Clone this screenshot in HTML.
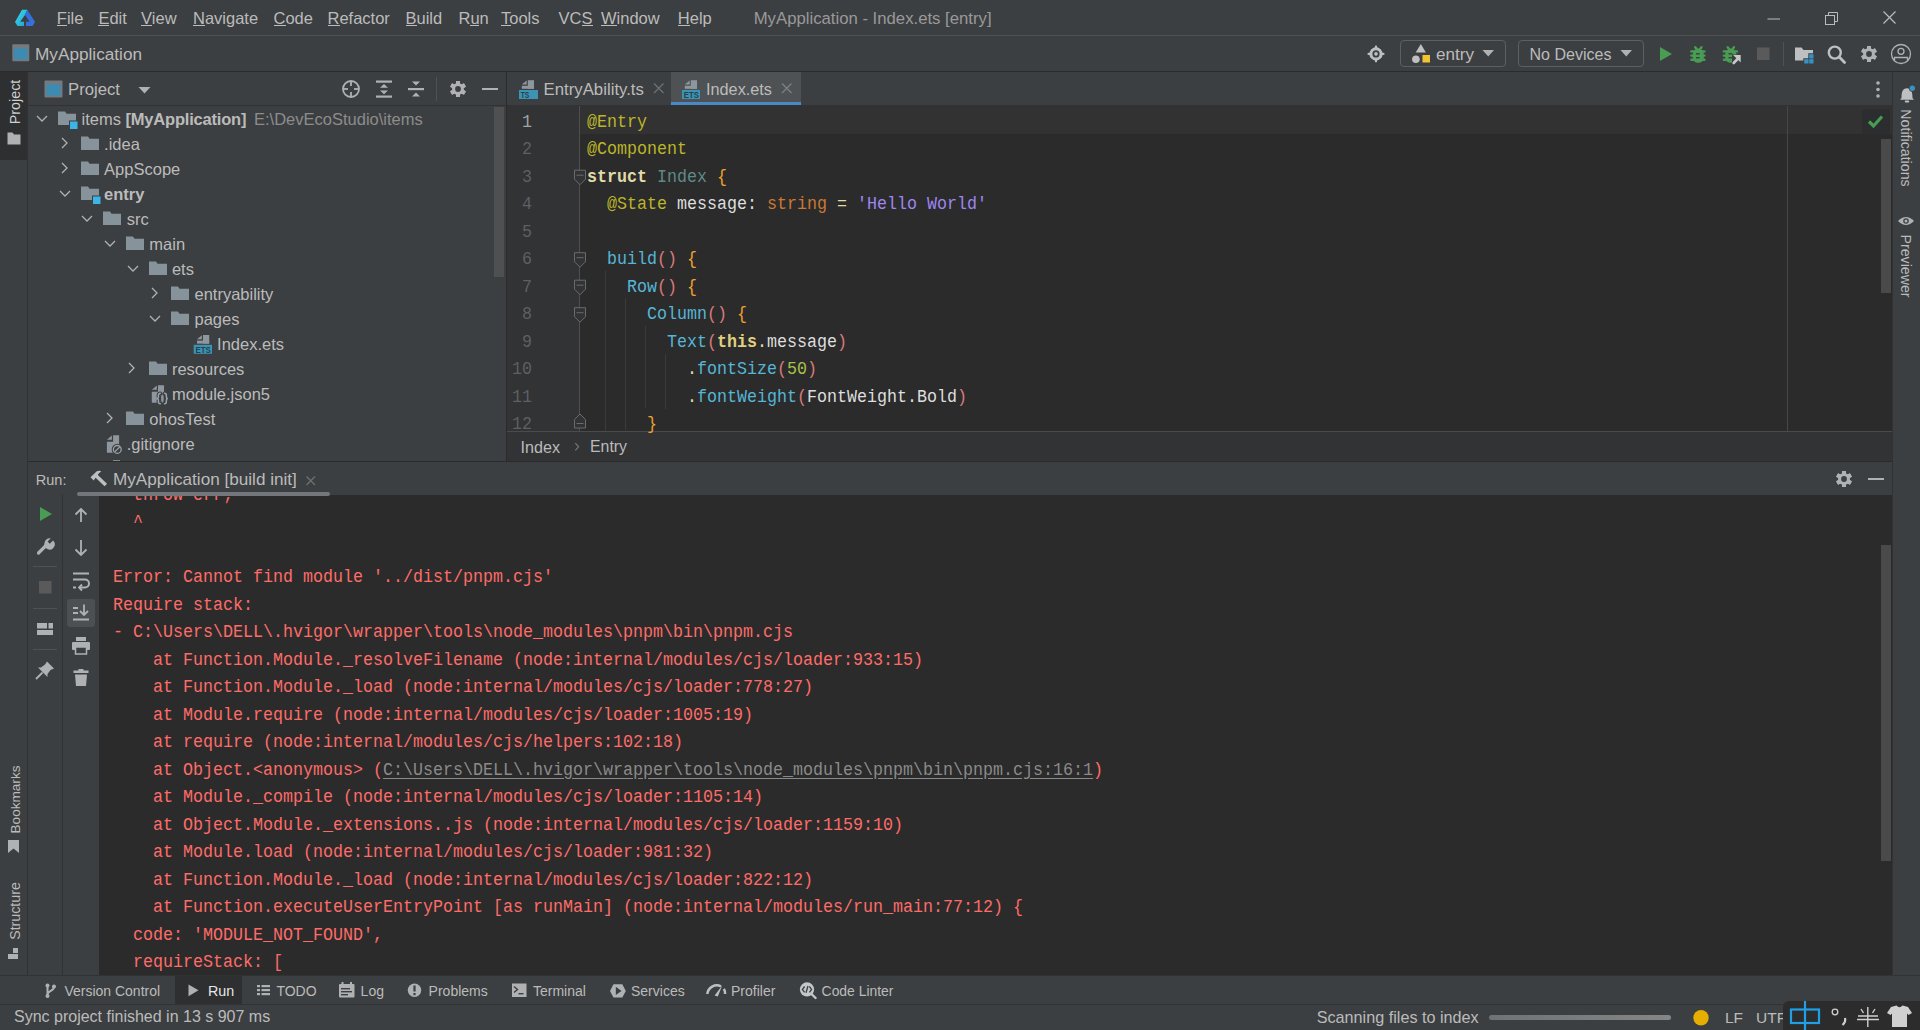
<!DOCTYPE html>
<html><head><meta charset="utf-8">
<style>
*{margin:0;padding:0;box-sizing:border-box}
html,body{width:1920px;height:1030px;overflow:hidden;background:#3C3F41}
body{position:relative;font-family:"Liberation Sans",sans-serif;color:#BBBBBB}
.a{position:absolute;white-space:pre}
svg{position:absolute;overflow:visible}
.hl{position:absolute}
u{text-decoration:underline;text-underline-offset:2px}
</style></head><body>

<div class="hl" style="left:0px;top:35px;width:1920px;height:1px;background:#515151;"></div>
<div class="hl" style="left:0px;top:71px;width:1920px;height:1px;background:#2B2B2B;"></div>
<div class="hl" style="left:0px;top:72px;width:27px;height:88px;background:#2D2F30;"></div>
<div class="hl" style="left:27px;top:72px;width:1px;height:903px;background:#323232;"></div>
<div class="hl" style="left:28px;top:105px;width:478px;height:1px;background:#323232;"></div>
<div class="hl" style="left:506px;top:72px;width:1px;height:390px;background:#2B2B2B;"></div>
<div class="hl" style="left:507px;top:105px;width:1386px;height:1px;background:#323232;"></div>
<div class="hl" style="left:507px;top:106px;width:1386px;height:325px;background:#2B2B2B;"></div>
<div class="hl" style="left:507px;top:106px;width:73px;height:325px;background:#313335;"></div>
<div class="hl" style="left:580px;top:106px;width:1313px;height:28px;background:#323232;"></div>
<div class="hl" style="left:507px;top:431px;width:1386px;height:1px;background:#4B4B4B;"></div>
<div class="hl" style="left:507px;top:432px;width:1386px;height:29px;background:#313335;"></div>
<div class="hl" style="left:28px;top:461px;width:1865px;height:1px;background:#2B2B2B;"></div>
<div class="hl" style="left:99px;top:495px;width:1794px;height:480px;background:#2B2B2B;"></div>
<div class="hl" style="left:62px;top:495px;width:1px;height:480px;background:#323232;"></div>
<div class="hl" style="left:1892px;top:72px;width:1px;height:903px;background:#323232;"></div>
<div class="hl" style="left:0px;top:975px;width:1920px;height:1px;background:#323232;"></div>
<div class="hl" style="left:0px;top:1004px;width:1920px;height:1px;background:#323232;"></div>
<svg style="left:0px;top:0px" width="40" height="35" viewBox="0 0 40 35"><defs><linearGradient id="lg1" x1="0" y1="0" x2="1" y2="1"><stop offset="0" stop-color="#3FE0E8"/><stop offset="1" stop-color="#1A9ED6"/></linearGradient>
<linearGradient id="lg2" x1="0" y1="0" x2="1" y2="1"><stop offset="0" stop-color="#2A6FD8"/><stop offset="1" stop-color="#3D6FE0"/></linearGradient></defs>
<path d="M22 9.8 L27.4 9.8 L25 14.9 L20.2 21.8 L24 21.8 L24 26 L17.5 26 L15 22 Z" fill="url(#lg1)"/>
<path d="M27.4 9.8 L35 22 L32.5 26 L26 26 L26 21.8 L29.7 21.8 L25 14.9 Z" fill="url(#lg2)"/></svg>
<div class="a" style="left:56.8px;top:9.07px;font-size:16.5px;color:#BBBBBB;font-family:'Liberation Sans',sans-serif;line-height:normal;">File</div>
<div class="a" style="left:98.4px;top:9.07px;font-size:16.5px;color:#BBBBBB;font-family:'Liberation Sans',sans-serif;line-height:normal;">Edit</div>
<div class="a" style="left:141.1px;top:9.07px;font-size:16.5px;color:#BBBBBB;font-family:'Liberation Sans',sans-serif;line-height:normal;">View</div>
<div class="a" style="left:193px;top:9.07px;font-size:16.5px;color:#BBBBBB;font-family:'Liberation Sans',sans-serif;line-height:normal;">Navigate</div>
<div class="a" style="left:273.5px;top:9.07px;font-size:16.5px;color:#BBBBBB;font-family:'Liberation Sans',sans-serif;line-height:normal;">Code</div>
<div class="a" style="left:327.5px;top:9.07px;font-size:16.5px;color:#BBBBBB;font-family:'Liberation Sans',sans-serif;line-height:normal;">Refactor</div>
<div class="a" style="left:405.5px;top:9.07px;font-size:16.5px;color:#BBBBBB;font-family:'Liberation Sans',sans-serif;line-height:normal;">Build</div>
<div class="a" style="left:458.5px;top:9.07px;font-size:16.5px;color:#BBBBBB;font-family:'Liberation Sans',sans-serif;line-height:normal;">Run</div>
<div class="a" style="left:501px;top:9.07px;font-size:16.5px;color:#BBBBBB;font-family:'Liberation Sans',sans-serif;line-height:normal;">Tools</div>
<div class="a" style="left:558.6px;top:9.07px;font-size:16.5px;color:#BBBBBB;font-family:'Liberation Sans',sans-serif;line-height:normal;">VCS</div>
<div class="a" style="left:601px;top:9.07px;font-size:16.5px;color:#BBBBBB;font-family:'Liberation Sans',sans-serif;line-height:normal;">Window</div>
<div class="a" style="left:677.8px;top:9.07px;font-size:16.5px;color:#BBBBBB;font-family:'Liberation Sans',sans-serif;line-height:normal;">Help</div>
<div class="a" style="left:753.7px;top:8.86px;font-size:16.73px;color:#999999;font-family:'Liberation Sans',sans-serif;line-height:normal;">MyApplication - Index.ets [entry]</div>
<svg style="left:1761.5px;top:8.5px" width="30" height="20" viewBox="0 0 30 20"><rect x="5.5" y="9.5" width="12.5" height="1" fill="#BBBBBB"/></svg>
<svg style="left:1820.5px;top:9.5px" width="30" height="20" viewBox="0 0 30 20"><rect x="4.5" y="5.5" width="9" height="9" fill="none" stroke="#BBBBBB" stroke-width="1"/><path d="M7.5 5.5 V2.5 H16.5 V11.5 H13.5" fill="none" stroke="#BBBBBB" stroke-width="1"/></svg>
<svg style="left:1878px;top:8px" width="30" height="20" viewBox="0 0 30 20"><path d="M5.5 3.5 L17.5 15.5 M17.5 3.5 L5.5 15.5" stroke="#BBBBBB" stroke-width="1.2"/></svg>
<div class="hl" style="left:57px;top:25px;width:10px;height:1px;background:#BBBBBB;"></div>
<div class="hl" style="left:98px;top:25px;width:11px;height:1px;background:#BBBBBB;"></div>
<div class="hl" style="left:141px;top:25px;width:11px;height:1px;background:#BBBBBB;"></div>
<div class="hl" style="left:193px;top:25px;width:12px;height:1px;background:#BBBBBB;"></div>
<div class="hl" style="left:274px;top:25px;width:12px;height:1px;background:#BBBBBB;"></div>
<div class="hl" style="left:328px;top:25px;width:12px;height:1px;background:#BBBBBB;"></div>
<div class="hl" style="left:406px;top:25px;width:11px;height:1px;background:#BBBBBB;"></div>
<div class="hl" style="left:470px;top:25px;width:9px;height:1px;background:#BBBBBB;"></div>
<div class="hl" style="left:501px;top:25px;width:10px;height:1px;background:#BBBBBB;"></div>
<div class="hl" style="left:582px;top:25px;width:11px;height:1px;background:#BBBBBB;"></div>
<div class="hl" style="left:601px;top:25px;width:16px;height:1px;background:#BBBBBB;"></div>
<div class="hl" style="left:678px;top:25px;width:12px;height:1px;background:#BBBBBB;"></div>
<svg style="left:0px;top:0px" width="1" height="1" viewBox="0 0 1 1"><rect x="12.3" y="44.3" width="17" height="17" fill="#737B80" rx="1"/><rect x="14.1" y="48.4" width="13.4" height="10.9" fill="#3B8BB3"/></svg>
<div class="a" style="left:35px;top:43.74px;font-size:17.19px;color:#BBBBBB;font-family:'Liberation Sans',sans-serif;line-height:normal;">MyApplication</div>
<svg style="left:0px;top:0px" width="1" height="1" viewBox="0 0 1 1"><circle cx="1376" cy="53.9" r="5.1" fill="none" stroke="#BDBFC1" stroke-width="3"/><circle cx="1376" cy="53.9" r="1.8" fill="#BDBFC1"/><path d="M1374.6 48 L1375.2 45.5 H1376.8 L1377.4 48 Z M1374.6 59.8 L1375.2 62.3 H1376.8 L1377.4 59.8 Z M1370.1 52.5 L1367.6 53.1 V54.7 L1370.1 55.3 Z M1381.9 52.5 L1384.4 53.1 V54.7 L1381.9 55.3 Z" fill="#BDBFC1"/></svg>
<div class="hl" style="left:1400px;top:40px;width:106px;height:27px;border:1px solid #5E6060;border-radius:4px"></div>
<svg style="left:0px;top:0px" width="1" height="1" viewBox="0 0 1 1"><path d="M1420.8 44 L1425.9 52.6 H1415.7 Z" fill="#BDBFC1"/><circle cx="1415.9" cy="59.2" r="3.8" fill="#BDBFC1"/><rect x="1422.5" y="55" width="7.5" height="7.5" fill="#F4C430"/></svg>
<div class="a" style="left:1436px;top:44.53px;font-size:17.09px;color:#BBBBBB;font-family:'Liberation Sans',sans-serif;line-height:normal;">entry</div>
<svg style="left:1482px;top:49px" width="14" height="10" viewBox="0 0 14 10"><path d="M0.5 1 H12 L6.25 7.5 Z" fill="#AFB1B3"/></svg>
<div class="hl" style="left:1518px;top:40px;width:126px;height:27px;border:1px solid #5E6060;border-radius:4px"></div>
<div class="a" style="left:1529.5px;top:45.48px;font-size:16.04px;color:#BBBBBB;font-family:'Liberation Sans',sans-serif;line-height:normal;">No Devices</div>
<svg style="left:1620px;top:49px" width="14" height="10" viewBox="0 0 14 10"><path d="M0.5 1 H12 L6.25 7.5 Z" fill="#AFB1B3"/></svg>
<svg style="left:1658px;top:46px" width="16" height="17" viewBox="0 0 16 17"><path d="M2 1 L14 8 L2 15 Z" fill="#499C54"/></svg>
<svg style="left:0;top:0" width="1920" height="1030"><g transform="translate(1685,42)"><path d="M10.2 5.2 L12.3 8 M16.5 5.2 L14.4 8" stroke="#499C54" stroke-width="2.4" stroke-linecap="round"/><rect x="7.8" y="6.6" width="11" height="14.2" rx="5.3" fill="#499C54"/><path d="M6.4 9.4 H19.4" stroke="#499C54" stroke-width="2.4" stroke-linecap="round"/><path d="M6.4 13.6 H19.4" stroke="#499C54" stroke-width="2.4" stroke-linecap="round"/><path d="M6.4 17.8 H19.4" stroke="#499C54" stroke-width="2.4" stroke-linecap="round"/><rect x="11" y="11.1" width="3.8" height="1.4" fill="#3C3F41"/><rect x="11" y="15" width="3.8" height="1.4" fill="#3C3F41"/></g><g transform="translate(1717.5,42)"><path d="M10.2 5.2 L12.3 8 M16.5 5.2 L14.4 8" stroke="#499C54" stroke-width="2.4" stroke-linecap="round"/><rect x="7.8" y="6.6" width="11" height="14.2" rx="5.3" fill="#499C54"/><path d="M6.4 9.4 H19.4" stroke="#499C54" stroke-width="2.4" stroke-linecap="round"/><path d="M6.4 13.6 H19.4" stroke="#499C54" stroke-width="2.4" stroke-linecap="round"/><path d="M6.4 17.8 H19.4" stroke="#499C54" stroke-width="2.4" stroke-linecap="round"/><rect x="11" y="11.1" width="3.8" height="1.4" fill="#3C3F41"/><rect x="11" y="15" width="3.8" height="1.4" fill="#3C3F41"/><path d="M14.5 12.5 H23.5 V22 H14.5 Z" fill="#3C3F41"/><path d="M15.6 13 H23.2 V20.5 Z" fill="#C8C8C8"/><path d="M16.2 21 L20.5 16.5" stroke="#C8C8C8" stroke-width="2.6" stroke-linecap="round"/></g></svg>
<svg style="left:1757px;top:47px" width="13" height="13" viewBox="0 0 13 13"><rect x="0" y="0.5" width="12.5" height="12.5" fill="#5A5A5A"/></svg>
<div class="hl" style="left:1783px;top:42px;width:1px;height:24px;background:#515151;"></div>
<svg style="left:0px;top:0px" width="1" height="1" viewBox="0 0 1 1"><path d="M1795 47.5 H1801.5 L1803.5 50 H1813 V53.2 H1808.3 V58.3 H1803.3 V60.5 H1795 Z" fill="#BDBFC1"/><rect x="1809.2" y="54.2" width="4.3" height="4.3" fill="#3592C4"/><rect x="1804.2" y="59.2" width="4.3" height="4.3" fill="#3592C4"/><rect x="1809.2" y="59.2" width="4.3" height="4.3" fill="#3592C4"/></svg>
<svg style="left:0px;top:0px" width="1" height="1" viewBox="0 0 1 1"><circle cx="1834.8" cy="52.6" r="6" fill="none" stroke="#BDBFC1" stroke-width="2.4"/><path d="M1839.2 57 L1844.6 62.4" stroke="#BDBFC1" stroke-width="2.8" stroke-linecap="round"/></svg>
<svg style="left:0px;top:0px" width="1" height="1" viewBox="0 0 1 1"></svg>
<svg style="left:1861px;top:46px" width="1" height="1" viewBox="0 0 1 1"><circle cx="8" cy="8" r="5.92" fill="#AFB1B3"/><rect x="6.00" y="0.00" width="4.00" height="16.00" rx="0.6" fill="#AFB1B3" transform="rotate(0 8 8)"/><rect x="6.00" y="0.00" width="4.00" height="16.00" rx="0.6" fill="#AFB1B3" transform="rotate(60 8 8)"/><rect x="6.00" y="0.00" width="4.00" height="16.00" rx="0.6" fill="#AFB1B3" transform="rotate(120 8 8)"/><rect x="6.00" y="0.00" width="4.00" height="16.00" rx="0.6" fill="#AFB1B3" transform="rotate(180 8 8)"/><rect x="6.00" y="0.00" width="4.00" height="16.00" rx="0.6" fill="#AFB1B3" transform="rotate(240 8 8)"/><rect x="6.00" y="0.00" width="4.00" height="16.00" rx="0.6" fill="#AFB1B3" transform="rotate(300 8 8)"/><circle cx="8" cy="8" r="2.88" fill="#3C3F41"/></svg>
<svg style="left:1890px;top:43px" width="22" height="22" viewBox="0 0 22 22"><circle cx="11" cy="11" r="9.5" fill="none" stroke="#AFB1B3" stroke-width="1.3"/><circle cx="11" cy="8.3" r="3" fill="none" stroke="#AFB1B3" stroke-width="1.3"/><path d="M4.5 17.5 V14.5 H17.5 V17.5" fill="none" stroke="#AFB1B3" stroke-width="1.3"/></svg>
<div class="a" style="left:-6.75px;top:94.28px;font-size:14.3px;color:#D0D0D0;line-height:normal;transform:rotate(-90deg);transform-origin:50% 50%">Project</div>
<svg style="left:7px;top:132px" width="16" height="14" viewBox="0 0 16 14"><path d="M0.5 0.5 H5.5 L7 2.5 H13.5 V12.5 H0.5 Z" fill="#AFB1B3"/></svg>
<div class="a" style="left:-19.21px;top:792.19px;font-size:13.6px;color:#BBBBBB;line-height:normal;transform:rotate(-90deg);transform-origin:50% 50%">Bookmarks</div>
<svg style="left:7px;top:839px" width="14" height="15" viewBox="0 0 14 15"><path d="M1 1 H12 V14 L6.5 9.5 L1 14 Z" fill="#AFB1B3"/></svg>
<div class="a" style="left:-14.01px;top:902.84px;font-size:14.2px;color:#BBBBBB;line-height:normal;transform:rotate(-90deg);transform-origin:50% 50%">Structure</div>
<svg style="left:7px;top:947px" width="14" height="14" viewBox="0 0 14 14"><rect x="6" y="1" width="5" height="5" fill="#AFB1B3"/><rect x="1" y="7" width="5" height="5" fill="#AFB1B3"/><rect x="6" y="7" width="5" height="5" fill="#AFB1B3"/></svg>
<svg style="left:44px;top:80px" width="20" height="20" viewBox="0 0 20 20"><rect x="0.5" y="0.5" width="18" height="17" fill="#737B80" rx="1"/><rect x="2.5" y="4.5" width="14" height="11" fill="#3B8BB3"/></svg>
<div class="a" style="left:68px;top:79.88px;font-size:16.71px;color:#BBBBBB;font-family:'Liberation Sans',sans-serif;line-height:normal;">Project</div>
<svg style="left:137px;top:84px" width="16" height="12" viewBox="0 0 16 12"><path d="M1.5 3 H13.5 L7.5 9.5 Z" fill="#AFB1B3"/></svg>
<svg style="left:342px;top:80px" width="20" height="20" viewBox="0 0 20 20"><circle cx="9" cy="9" r="8" fill="none" stroke="#AFB1B3" stroke-width="1.8"/><rect x="8.1" y="1" width="1.8" height="5" fill="#AFB1B3"/><rect x="8.1" y="12" width="1.8" height="5" fill="#AFB1B3"/><rect x="1" y="8.1" width="5" height="1.8" fill="#AFB1B3"/><rect x="12" y="8.1" width="5" height="1.8" fill="#AFB1B3"/></svg>
<svg style="left:376px;top:80px" width="18" height="20" viewBox="0 0 18 20"><rect x="0" y="0.5" width="16" height="2.2" fill="#AFB1B3"/><rect x="0" y="15.5" width="16" height="2.2" fill="#AFB1B3"/><path d="M4 7.8 L8 4 L12 7.8 Z M4 10.4 L8 14.2 L12 10.4 Z" fill="#AFB1B3"/></svg>
<svg style="left:408px;top:80px" width="18" height="20" viewBox="0 0 18 20"><rect x="0" y="8" width="16" height="2.2" fill="#AFB1B3"/><path d="M4 1.5 L8 5.5 L12 1.5 Z M4 16.5 L8 12.5 L12 16.5 Z" fill="#AFB1B3"/></svg>
<div class="hl" style="left:436px;top:77px;width:1px;height:24px;background:#515151;"></div>
<svg style="left:450px;top:81px" width="1" height="1" viewBox="0 0 1 1"><circle cx="8" cy="8" r="5.92" fill="#AFB1B3"/><rect x="6.00" y="0.00" width="4.00" height="16.00" rx="0.6" fill="#AFB1B3" transform="rotate(0 8 8)"/><rect x="6.00" y="0.00" width="4.00" height="16.00" rx="0.6" fill="#AFB1B3" transform="rotate(60 8 8)"/><rect x="6.00" y="0.00" width="4.00" height="16.00" rx="0.6" fill="#AFB1B3" transform="rotate(120 8 8)"/><rect x="6.00" y="0.00" width="4.00" height="16.00" rx="0.6" fill="#AFB1B3" transform="rotate(180 8 8)"/><rect x="6.00" y="0.00" width="4.00" height="16.00" rx="0.6" fill="#AFB1B3" transform="rotate(240 8 8)"/><rect x="6.00" y="0.00" width="4.00" height="16.00" rx="0.6" fill="#AFB1B3" transform="rotate(300 8 8)"/><circle cx="8" cy="8" r="2.88" fill="#3C3F41"/></svg>
<div class="hl" style="left:482px;top:88px;width:16px;height:2.2px;background:#AFB1B3;"></div>
<div class="hl" style="left:494px;top:107px;width:10px;height:170px;background:#4E5052;"></div>
<svg style="left:36.2px;top:115px" width="12" height="8" viewBox="0 0 12 8"><path d="M1 1 L6 6 L11 1" fill="none" stroke="#AFB1B3" stroke-width="1.3"/></svg>
<svg style="left:58.1px;top:110.6px" width="21" height="18" viewBox="0 0 21 18"><path d="M0 0.5 H7 L8.5 2.8 H18 V14 H0 Z" fill="#87939A"/><rect x="11" y="9.5" width="9" height="9" fill="#3C3F41"/><rect x="12" y="10.5" width="7.5" height="7.5" fill="#3DB4E6"/></svg>
<div class="a" style="left:81.5px;top:110.07px;font-size:16.5px;color:#BBBBBB;font-family:'Liberation Sans',sans-serif;line-height:normal;">items </div>
<div class="a" style="left:125.5055px;top:110.07px;font-size:16.5px;color:#BBBBBB;font-family:'Liberation Sans',sans-serif;line-height:normal;font-weight:bold;letter-spacing:-0.2px;">[MyApplication]</div>
<div class="a" style="left:254px;top:110.07px;font-size:16.5px;color:#8C8C8C;font-family:'Liberation Sans',sans-serif;line-height:normal;">E:\DevEcoStudio\items</div>
<svg style="left:60.599999999999994px;top:137px" width="8" height="12" viewBox="0 0 8 12"><path d="M1 1 L6 6 L1 11" fill="none" stroke="#AFB1B3" stroke-width="1.3"/></svg>
<svg style="left:80.69999999999999px;top:135.6px" width="19" height="15" viewBox="0 0 19 15"><path d="M0 0.5 H7 L8.5 2.8 H18 V14 H0 Z" fill="#87939A"/></svg>
<div class="a" style="left:104.1px;top:135.07px;font-size:16.5px;color:#BBBBBB;font-family:'Liberation Sans',sans-serif;line-height:normal;">.idea</div>
<svg style="left:60.599999999999994px;top:162px" width="8" height="12" viewBox="0 0 8 12"><path d="M1 1 L6 6 L1 11" fill="none" stroke="#AFB1B3" stroke-width="1.3"/></svg>
<svg style="left:80.69999999999999px;top:160.6px" width="19" height="15" viewBox="0 0 19 15"><path d="M0 0.5 H7 L8.5 2.8 H18 V14 H0 Z" fill="#87939A"/></svg>
<div class="a" style="left:104.1px;top:160.07px;font-size:16.5px;color:#BBBBBB;font-family:'Liberation Sans',sans-serif;line-height:normal;">AppScope</div>
<svg style="left:58.8px;top:190px" width="12" height="8" viewBox="0 0 12 8"><path d="M1 1 L6 6 L11 1" fill="none" stroke="#AFB1B3" stroke-width="1.3"/></svg>
<svg style="left:80.69999999999999px;top:185.6px" width="21" height="18" viewBox="0 0 21 18"><path d="M0 0.5 H7 L8.5 2.8 H18 V14 H0 Z" fill="#87939A"/><rect x="11" y="9.5" width="9" height="9" fill="#3C3F41"/><rect x="12" y="10.5" width="7.5" height="7.5" fill="#3DB4E6"/></svg>
<div class="a" style="left:104.1px;top:185.07px;font-size:16.5px;color:#BBBBBB;font-family:'Liberation Sans',sans-serif;line-height:normal;font-weight:bold;">entry</div>
<svg style="left:81.4px;top:215px" width="12" height="8" viewBox="0 0 12 8"><path d="M1 1 L6 6 L11 1" fill="none" stroke="#AFB1B3" stroke-width="1.3"/></svg>
<svg style="left:103.30000000000001px;top:210.6px" width="19" height="15" viewBox="0 0 19 15"><path d="M0 0.5 H7 L8.5 2.8 H18 V14 H0 Z" fill="#87939A"/></svg>
<div class="a" style="left:126.7px;top:210.07px;font-size:16.5px;color:#BBBBBB;font-family:'Liberation Sans',sans-serif;line-height:normal;">src</div>
<svg style="left:104.00000000000001px;top:240px" width="12" height="8" viewBox="0 0 12 8"><path d="M1 1 L6 6 L11 1" fill="none" stroke="#AFB1B3" stroke-width="1.3"/></svg>
<svg style="left:125.9px;top:235.6px" width="19" height="15" viewBox="0 0 19 15"><path d="M0 0.5 H7 L8.5 2.8 H18 V14 H0 Z" fill="#87939A"/></svg>
<div class="a" style="left:149.3px;top:235.07px;font-size:16.5px;color:#BBBBBB;font-family:'Liberation Sans',sans-serif;line-height:normal;">main</div>
<svg style="left:126.60000000000001px;top:265px" width="12" height="8" viewBox="0 0 12 8"><path d="M1 1 L6 6 L11 1" fill="none" stroke="#AFB1B3" stroke-width="1.3"/></svg>
<svg style="left:148.5px;top:260.6px" width="19" height="15" viewBox="0 0 19 15"><path d="M0 0.5 H7 L8.5 2.8 H18 V14 H0 Z" fill="#87939A"/></svg>
<div class="a" style="left:171.9px;top:260.07px;font-size:16.5px;color:#BBBBBB;font-family:'Liberation Sans',sans-serif;line-height:normal;">ets</div>
<svg style="left:151.0px;top:287px" width="8" height="12" viewBox="0 0 8 12"><path d="M1 1 L6 6 L1 11" fill="none" stroke="#AFB1B3" stroke-width="1.3"/></svg>
<svg style="left:171.1px;top:285.6px" width="19" height="15" viewBox="0 0 19 15"><path d="M0 0.5 H7 L8.5 2.8 H18 V14 H0 Z" fill="#87939A"/></svg>
<div class="a" style="left:194.5px;top:285.07px;font-size:16.5px;color:#BBBBBB;font-family:'Liberation Sans',sans-serif;line-height:normal;">entryability</div>
<svg style="left:149.2px;top:315px" width="12" height="8" viewBox="0 0 12 8"><path d="M1 1 L6 6 L11 1" fill="none" stroke="#AFB1B3" stroke-width="1.3"/></svg>
<svg style="left:171.1px;top:310.6px" width="19" height="15" viewBox="0 0 19 15"><path d="M0 0.5 H7 L8.5 2.8 H18 V14 H0 Z" fill="#87939A"/></svg>
<div class="a" style="left:194.5px;top:310.07px;font-size:16.5px;color:#BBBBBB;font-family:'Liberation Sans',sans-serif;line-height:normal;">pages</div>
<div class="a" style="left:217.10000000000002px;top:335.07px;font-size:16.5px;color:#BBBBBB;font-family:'Liberation Sans',sans-serif;line-height:normal;">Index.ets</div>
<svg style="left:128.4px;top:362px" width="8" height="12" viewBox="0 0 8 12"><path d="M1 1 L6 6 L1 11" fill="none" stroke="#AFB1B3" stroke-width="1.3"/></svg>
<svg style="left:148.5px;top:360.6px" width="19" height="15" viewBox="0 0 19 15"><path d="M0 0.5 H7 L8.5 2.8 H18 V14 H0 Z" fill="#87939A"/></svg>
<div class="a" style="left:171.9px;top:360.07px;font-size:16.5px;color:#BBBBBB;font-family:'Liberation Sans',sans-serif;line-height:normal;">resources</div>
<div class="a" style="left:171.9px;top:385.07px;font-size:16.5px;color:#BBBBBB;font-family:'Liberation Sans',sans-serif;line-height:normal;">module.json5</div>
<svg style="left:105.80000000000001px;top:412px" width="8" height="12" viewBox="0 0 8 12"><path d="M1 1 L6 6 L1 11" fill="none" stroke="#AFB1B3" stroke-width="1.3"/></svg>
<svg style="left:125.9px;top:410.6px" width="19" height="15" viewBox="0 0 19 15"><path d="M0 0.5 H7 L8.5 2.8 H18 V14 H0 Z" fill="#87939A"/></svg>
<div class="a" style="left:149.3px;top:410.07px;font-size:16.5px;color:#BBBBBB;font-family:'Liberation Sans',sans-serif;line-height:normal;">ohosTest</div>
<div class="a" style="left:126.7px;top:435.07px;font-size:16.5px;color:#BBBBBB;font-family:'Liberation Sans',sans-serif;line-height:normal;">.gitignore</div>
<svg style="left:0px;top:0px" width="1" height="1" viewBox="0 0 1 1"></svg>
<svg style="left:0;top:0" width="1920" height="1030"><path d="M197 339.3 L201.9 335.3 V339.3 Z" fill="#8E979D"/><rect x="203" y="335" width="6.2" height="8.6" fill="#8E979D"/><rect x="197" y="340.6" width="12.2" height="3" fill="#8E979D"/><rect x="193.7" y="344.8" width="18.3" height="9" fill="#3D93B4"/><text x="195.5" y="352.6" font-family="Liberation Sans" font-size="9" font-weight="bold" fill="#27414D" textLength="15.3" lengthAdjust="spacingAndGlyphs">ETS</text><path d="M151.8 389.8 L156.8 385.4 V389.8 Z" fill="#8E979D"/><path d="M158.0 385.2 H164.0 V402.8 H151.8 V391.7 H158.0 Z" fill="#8E979D"/><g fill="none" stroke-linecap="round"><path d="M160.3 393.3 Q158.4 393.3 158.4 395.6 V396.9 Q158.4 398.5 156.9 398.5 Q158.4 398.5 158.4 400.1 V401.4 Q158.4 403.7 160.3 403.7" stroke="#3C3F41" stroke-width="3.6"/><path d="M164.5 393.3 Q166.4 393.3 166.4 395.6 V396.9 Q166.4 398.5 167.9 398.5 Q166.4 398.5 166.4 400.1 V401.4 Q166.4 403.7 164.5 403.7" stroke="#3C3F41" stroke-width="3.6"/><path d="M160.3 393.3 Q158.4 393.3 158.4 395.6 V396.9 Q158.4 398.5 156.9 398.5 Q158.4 398.5 158.4 400.1 V401.4 Q158.4 403.7 160.3 403.7" stroke="#9AA3A9" stroke-width="1.5"/><path d="M164.5 393.3 Q166.4 393.3 166.4 395.6 V396.9 Q166.4 398.5 167.9 398.5 Q166.4 398.5 166.4 400.1 V401.4 Q166.4 403.7 164.5 403.7" stroke="#9AA3A9" stroke-width="1.5"/></g><ellipse cx="162.4" cy="398.5" rx="1.9" ry="4.6" fill="#8E979D" stroke="#3C3F41" stroke-width="1.2"/><path d="M106.9 439.8 L111.9 435.4 V439.8 Z" fill="#8E979D"/><path d="M113.10000000000001 435.2 H119.10000000000001 V452.8 H106.9 V441.7 H113.10000000000001 Z" fill="#8E979D"/><circle cx="117.3" cy="449.4" r="5.6" fill="#3C3F41"/><circle cx="117.3" cy="449.4" r="3.9" fill="none" stroke="#9AA3A9" stroke-width="1.3"/><path d="M114.8 451.9 L119.8 446.9" stroke="#9AA3A9" stroke-width="1.3"/></svg>
<div class="hl" style="left:671px;top:72px;width:130px;height:33px;background:#4E5254;"></div>
<div class="hl" style="left:671px;top:102px;width:130px;height:3px;background:#4A88C7;"></div>
<svg style="left:0;top:0" width="1920" height="1030"><path d="M521.8 84.5 L526.6999999999999 80.5 V84.5 Z" fill="#8E979D"/><rect x="527.8" y="80.2" width="6.2" height="8.6" fill="#8E979D"/><rect x="521.8" y="85.8" width="12.2" height="3" fill="#8E979D"/><rect x="519" y="90.0" width="19" height="9" fill="#3D93B4"/><text x="520.8" y="97.80000000000001" font-family="Liberation Sans" font-size="9" font-weight="bold" fill="#27414D" textLength="8.5" lengthAdjust="spacingAndGlyphs">TS</text><path d="M684.8 84.5 L689.6999999999999 80.5 V84.5 Z" fill="#8E979D"/><rect x="690.8" y="80.2" width="6.2" height="8.6" fill="#8E979D"/><rect x="684.8" y="85.8" width="12.2" height="3" fill="#8E979D"/><rect x="682" y="90.0" width="18" height="9" fill="#3D93B4"/><text x="683.8" y="97.80000000000001" font-family="Liberation Sans" font-size="9" font-weight="bold" fill="#27414D" textLength="15" lengthAdjust="spacingAndGlyphs">ETS</text><path d="M654 83.5 L663.5 93 M663.5 83.5 L654 93" stroke="#6E7072" stroke-width="1.3"/><path d="M782 83.5 L791.5 93 M791.5 83.5 L782 93" stroke="#7E8082" stroke-width="1.3"/></svg>
<div class="a" style="left:543.5px;top:79.80px;font-size:16.8px;color:#BBBBBB;font-family:'Liberation Sans',sans-serif;line-height:normal;">EntryAbility.ts</div>
<div class="a" style="left:706px;top:80.28px;font-size:16.26px;color:#BBBBBB;font-family:'Liberation Sans',sans-serif;line-height:normal;">Index.ets</div>
<svg style="left:1872px;top:80px" width="12" height="20" viewBox="0 0 12 20"><circle cx="6" cy="3" r="1.8" fill="#AFB1B3"/><circle cx="6" cy="9.5" r="1.8" fill="#AFB1B3"/><circle cx="6" cy="16" r="1.8" fill="#AFB1B3"/></svg>
<div class="hl" style="left:605px;top:271px;width:1px;height:160px;background:#3B3B3B;"></div>
<div class="hl" style="left:625px;top:298px;width:1px;height:132px;background:#3B3B3B;"></div>
<div class="hl" style="left:645px;top:326px;width:1px;height:82px;background:#3B3B3B;"></div>
<div class="hl" style="left:665px;top:354px;width:1px;height:55px;background:#3B3B3B;"></div>
<div class="hl" style="left:579px;top:106px;width:1px;height:325px;background:#4F4F4F;"></div>
<div class="hl" style="left:1787px;top:106px;width:1px;height:325px;background:#474747;"></div>
<div class="a" style="left:522px;top:111.51px;font-size:18px;color:#A4A3A3;font-family:'Liberation Mono',monospace;line-height:normal;transform:scaleX(0.9259);transform-origin:0 0;">1</div>
<div class="a" style="left:587px;top:111.51px;font-size:18px;color:#BBB529;font-family:'Liberation Mono',monospace;line-height:normal;transform:scaleX(0.9259);transform-origin:0 0;">@Entry</div>
<div class="a" style="left:522px;top:139.01px;font-size:18px;color:#5E6062;font-family:'Liberation Mono',monospace;line-height:normal;transform:scaleX(0.9259);transform-origin:0 0;">2</div>
<div class="a" style="left:587px;top:139.01px;font-size:18px;color:#BBB529;font-family:'Liberation Mono',monospace;line-height:normal;transform:scaleX(0.9259);transform-origin:0 0;">@Component</div>
<div class="a" style="left:522px;top:166.51px;font-size:18px;color:#5E6062;font-family:'Liberation Mono',monospace;line-height:normal;transform:scaleX(0.9259);transform-origin:0 0;">3</div>
<div class="a" style="left:587px;top:166.51px;font-size:18px;color:#E0DCA8;font-family:'Liberation Mono',monospace;line-height:normal;transform:scaleX(0.9259);transform-origin:0 0;font-weight:bold;">struct</div>
<div class="a" style="left:657px;top:166.51px;font-size:18px;color:#5F8A88;font-family:'Liberation Mono',monospace;line-height:normal;transform:scaleX(0.9259);transform-origin:0 0;">Index</div>
<div class="a" style="left:717px;top:166.51px;font-size:18px;color:#F0A030;font-family:'Liberation Mono',monospace;line-height:normal;transform:scaleX(0.9259);transform-origin:0 0;">{</div>
<div class="a" style="left:522px;top:194.01px;font-size:18px;color:#5E6062;font-family:'Liberation Mono',monospace;line-height:normal;transform:scaleX(0.9259);transform-origin:0 0;">4</div>
<div class="a" style="left:607px;top:194.01px;font-size:18px;color:#BBB529;font-family:'Liberation Mono',monospace;line-height:normal;transform:scaleX(0.9259);transform-origin:0 0;">@State</div>
<div class="a" style="left:667px;top:194.01px;font-size:18px;color:#DEDEDE;font-family:'Liberation Mono',monospace;line-height:normal;transform:scaleX(0.9259);transform-origin:0 0;"> message: </div>
<div class="a" style="left:767px;top:194.01px;font-size:18px;color:#CC7832;font-family:'Liberation Mono',monospace;line-height:normal;transform:scaleX(0.9259);transform-origin:0 0;">string</div>
<div class="a" style="left:827px;top:194.01px;font-size:18px;color:#E0DCA8;font-family:'Liberation Mono',monospace;line-height:normal;transform:scaleX(0.9259);transform-origin:0 0;"> = </div>
<div class="a" style="left:857px;top:194.01px;font-size:18px;color:#9E86F0;font-family:'Liberation Mono',monospace;line-height:normal;transform:scaleX(0.9259);transform-origin:0 0;">&#x27;Hello World&#x27;</div>
<div class="a" style="left:522px;top:221.51px;font-size:18px;color:#5E6062;font-family:'Liberation Mono',monospace;line-height:normal;transform:scaleX(0.9259);transform-origin:0 0;">5</div>
<div class="a" style="left:522px;top:249.01px;font-size:18px;color:#5E6062;font-family:'Liberation Mono',monospace;line-height:normal;transform:scaleX(0.9259);transform-origin:0 0;">6</div>
<div class="a" style="left:607px;top:249.01px;font-size:18px;color:#56B6D6;font-family:'Liberation Mono',monospace;line-height:normal;transform:scaleX(0.9259);transform-origin:0 0;">build</div>
<div class="a" style="left:657px;top:249.01px;font-size:18px;color:#D9797A;font-family:'Liberation Mono',monospace;line-height:normal;transform:scaleX(0.9259);transform-origin:0 0;">()</div>
<div class="a" style="left:687px;top:249.01px;font-size:18px;color:#F0A030;font-family:'Liberation Mono',monospace;line-height:normal;transform:scaleX(0.9259);transform-origin:0 0;">{</div>
<div class="a" style="left:522px;top:276.51px;font-size:18px;color:#5E6062;font-family:'Liberation Mono',monospace;line-height:normal;transform:scaleX(0.9259);transform-origin:0 0;">7</div>
<div class="a" style="left:627px;top:276.51px;font-size:18px;color:#56B6D6;font-family:'Liberation Mono',monospace;line-height:normal;transform:scaleX(0.9259);transform-origin:0 0;">Row</div>
<div class="a" style="left:657px;top:276.51px;font-size:18px;color:#D9797A;font-family:'Liberation Mono',monospace;line-height:normal;transform:scaleX(0.9259);transform-origin:0 0;">()</div>
<div class="a" style="left:687px;top:276.51px;font-size:18px;color:#F0A030;font-family:'Liberation Mono',monospace;line-height:normal;transform:scaleX(0.9259);transform-origin:0 0;">{</div>
<div class="a" style="left:522px;top:304.01px;font-size:18px;color:#5E6062;font-family:'Liberation Mono',monospace;line-height:normal;transform:scaleX(0.9259);transform-origin:0 0;">8</div>
<div class="a" style="left:647px;top:304.01px;font-size:18px;color:#56B6D6;font-family:'Liberation Mono',monospace;line-height:normal;transform:scaleX(0.9259);transform-origin:0 0;">Column</div>
<div class="a" style="left:707px;top:304.01px;font-size:18px;color:#D9797A;font-family:'Liberation Mono',monospace;line-height:normal;transform:scaleX(0.9259);transform-origin:0 0;">()</div>
<div class="a" style="left:737px;top:304.01px;font-size:18px;color:#F0A030;font-family:'Liberation Mono',monospace;line-height:normal;transform:scaleX(0.9259);transform-origin:0 0;">{</div>
<div class="a" style="left:522px;top:331.51px;font-size:18px;color:#5E6062;font-family:'Liberation Mono',monospace;line-height:normal;transform:scaleX(0.9259);transform-origin:0 0;">9</div>
<div class="a" style="left:667px;top:331.51px;font-size:18px;color:#56B6D6;font-family:'Liberation Mono',monospace;line-height:normal;transform:scaleX(0.9259);transform-origin:0 0;">Text</div>
<div class="a" style="left:707px;top:331.51px;font-size:18px;color:#D9797A;font-family:'Liberation Mono',monospace;line-height:normal;transform:scaleX(0.9259);transform-origin:0 0;">(</div>
<div class="a" style="left:717px;top:331.51px;font-size:18px;color:#E0D080;font-family:'Liberation Mono',monospace;line-height:normal;transform:scaleX(0.9259);transform-origin:0 0;font-weight:bold;">this</div>
<div class="a" style="left:757px;top:331.51px;font-size:18px;color:#E0DCA8;font-family:'Liberation Mono',monospace;line-height:normal;transform:scaleX(0.9259);transform-origin:0 0;">.</div>
<div class="a" style="left:767px;top:331.51px;font-size:18px;color:#DEDEDE;font-family:'Liberation Mono',monospace;line-height:normal;transform:scaleX(0.9259);transform-origin:0 0;">message</div>
<div class="a" style="left:837px;top:331.51px;font-size:18px;color:#D9797A;font-family:'Liberation Mono',monospace;line-height:normal;transform:scaleX(0.9259);transform-origin:0 0;">)</div>
<div class="a" style="left:512px;top:359.01px;font-size:18px;color:#5E6062;font-family:'Liberation Mono',monospace;line-height:normal;transform:scaleX(0.9259);transform-origin:0 0;">10</div>
<div class="a" style="left:687px;top:359.01px;font-size:18px;color:#E0DCA8;font-family:'Liberation Mono',monospace;line-height:normal;transform:scaleX(0.9259);transform-origin:0 0;">.</div>
<div class="a" style="left:697px;top:359.01px;font-size:18px;color:#56B6D6;font-family:'Liberation Mono',monospace;line-height:normal;transform:scaleX(0.9259);transform-origin:0 0;">fontSize</div>
<div class="a" style="left:777px;top:359.01px;font-size:18px;color:#D9797A;font-family:'Liberation Mono',monospace;line-height:normal;transform:scaleX(0.9259);transform-origin:0 0;">(</div>
<div class="a" style="left:787px;top:359.01px;font-size:18px;color:#A8C04A;font-family:'Liberation Mono',monospace;line-height:normal;transform:scaleX(0.9259);transform-origin:0 0;">50</div>
<div class="a" style="left:807px;top:359.01px;font-size:18px;color:#D9797A;font-family:'Liberation Mono',monospace;line-height:normal;transform:scaleX(0.9259);transform-origin:0 0;">)</div>
<div class="a" style="left:512px;top:386.51px;font-size:18px;color:#5E6062;font-family:'Liberation Mono',monospace;line-height:normal;transform:scaleX(0.9259);transform-origin:0 0;">11</div>
<div class="a" style="left:687px;top:386.51px;font-size:18px;color:#E0DCA8;font-family:'Liberation Mono',monospace;line-height:normal;transform:scaleX(0.9259);transform-origin:0 0;">.</div>
<div class="a" style="left:697px;top:386.51px;font-size:18px;color:#56B6D6;font-family:'Liberation Mono',monospace;line-height:normal;transform:scaleX(0.9259);transform-origin:0 0;">fontWeight</div>
<div class="a" style="left:797px;top:386.51px;font-size:18px;color:#D9797A;font-family:'Liberation Mono',monospace;line-height:normal;transform:scaleX(0.9259);transform-origin:0 0;">(</div>
<div class="a" style="left:807px;top:386.51px;font-size:18px;color:#DEDEDE;font-family:'Liberation Mono',monospace;line-height:normal;transform:scaleX(0.9259);transform-origin:0 0;">FontWeight.Bold</div>
<div class="a" style="left:957px;top:386.51px;font-size:18px;color:#D9797A;font-family:'Liberation Mono',monospace;line-height:normal;transform:scaleX(0.9259);transform-origin:0 0;">)</div>
<div class="a" style="left:512px;top:414.01px;font-size:18px;color:#5E6062;font-family:'Liberation Mono',monospace;line-height:normal;transform:scaleX(0.9259);transform-origin:0 0;">12</div>
<div class="a" style="left:647px;top:414.01px;font-size:18px;color:#F0A030;font-family:'Liberation Mono',monospace;line-height:normal;transform:scaleX(0.9259);transform-origin:0 0;">}</div>
<svg style="left:0;top:0" width="1920" height="1030"><path d="M574.5 170.2 H585.5 V179.2 L580 184.7 L574.5 179.2 Z" fill="#313335" stroke="#6B6B6B" stroke-width="1"/><path d="M576.5 175.2 H583.5" stroke="#6B6B6B" stroke-width="1"/><path d="M574.5 252.7 H585.5 V261.7 L580 267.2 L574.5 261.7 Z" fill="#313335" stroke="#6B6B6B" stroke-width="1"/><path d="M576.5 257.7 H583.5" stroke="#6B6B6B" stroke-width="1"/><path d="M574.5 280.2 H585.5 V289.2 L580 294.7 L574.5 289.2 Z" fill="#313335" stroke="#6B6B6B" stroke-width="1"/><path d="M576.5 285.2 H583.5" stroke="#6B6B6B" stroke-width="1"/><path d="M574.5 307.7 H585.5 V316.7 L580 322.2 L574.5 316.7 Z" fill="#313335" stroke="#6B6B6B" stroke-width="1"/><path d="M576.5 312.7 H583.5" stroke="#6B6B6B" stroke-width="1"/><path d="M574.5 428.0 H585.5 V419.5 L580 414.0 L574.5 419.5 Z" fill="#313335" stroke="#6B6B6B" stroke-width="1"/><path d="M576.5 423.5 H583.5" stroke="#6B6B6B" stroke-width="1"/></svg>
<div class="hl" style="left:1862px;top:109px;width:28px;height:26px;background:#2C2D2E;border-radius:4px"></div>
<svg style="left:1866px;top:112px" width="20" height="20" viewBox="0 0 20 20"><path d="M3 9.5 L7.5 14 L16 4.5" fill="none" stroke="#499C54" stroke-width="3.2"/></svg>
<div class="hl" style="left:1881px;top:139px;width:10px;height:154px;background:#4A4A4A;"></div>
<div class="a" style="left:520.6px;top:438.22px;font-size:16.11px;color:#BBBBBB;font-family:'Liberation Sans',sans-serif;line-height:normal;">Index</div>
<svg style="left:0px;top:0px" width="1" height="1" viewBox="0 0 1 1"><path d="M575.3 443.2 L578.6 446.8 L575.3 450.4" fill="none" stroke="#7A7A7A" stroke-width="1.1"/></svg>
<div class="a" style="left:590px;top:438.46px;font-size:15.85px;color:#BBBBBB;font-family:'Liberation Sans',sans-serif;line-height:normal;">Entry</div>
<div class="a" style="left:35.8px;top:471.85px;font-size:14.53px;color:#BBBBBB;font-family:'Liberation Sans',sans-serif;line-height:normal;">Run:</div>
<svg style="left:0;top:0" width="1920" height="1030"><path d="M90.5 477.3 L96.8 471.2 Q99.5 470.2 101.3 471.4 Q98.8 472.6 97.8 474.8 L93.6 480.5 Z" fill="#BDBFC1"/><path d="M95.8 475.5 L105.8 485" stroke="#BDBFC1" stroke-width="3.6"/></svg>
<div class="a" style="left:113px;top:469.48px;font-size:17.15px;color:#BBBBBB;font-family:'Liberation Sans',sans-serif;line-height:normal;">MyApplication [build init]</div>
<svg style="left:305px;top:474.5px" width="12" height="12" viewBox="0 0 12 12"><path d="M1.5 1.5 L10 10 M10 1.5 L1.5 10" stroke="#6E7072" stroke-width="1.3"/></svg>
<svg style="left:1836px;top:471px" width="1" height="1" viewBox="0 0 1 1"><circle cx="8" cy="8" r="5.92" fill="#AFB1B3"/><rect x="6.00" y="0.00" width="4.00" height="16.00" rx="0.6" fill="#AFB1B3" transform="rotate(0 8 8)"/><rect x="6.00" y="0.00" width="4.00" height="16.00" rx="0.6" fill="#AFB1B3" transform="rotate(60 8 8)"/><rect x="6.00" y="0.00" width="4.00" height="16.00" rx="0.6" fill="#AFB1B3" transform="rotate(120 8 8)"/><rect x="6.00" y="0.00" width="4.00" height="16.00" rx="0.6" fill="#AFB1B3" transform="rotate(180 8 8)"/><rect x="6.00" y="0.00" width="4.00" height="16.00" rx="0.6" fill="#AFB1B3" transform="rotate(240 8 8)"/><rect x="6.00" y="0.00" width="4.00" height="16.00" rx="0.6" fill="#AFB1B3" transform="rotate(300 8 8)"/><circle cx="8" cy="8" r="2.88" fill="#3C3F41"/></svg>
<div class="hl" style="left:1868px;top:478px;width:16px;height:2.2px;background:#AFB1B3;"></div>
<div class="hl" style="left:99px;top:495px;width:1794px;height:480px;overflow:hidden">
<div class="a" style="left:14px;top:-10.29px;font-family:'Liberation Mono',monospace;font-size:18px;transform:scaleX(0.9259);transform-origin:0 0;color:#FF6B68">  throw err;</div>
<div class="a" style="left:14px;top:17.21px;font-family:'Liberation Mono',monospace;font-size:18px;transform:scaleX(0.9259);transform-origin:0 0;color:#FF6B68">  ^</div>
<div class="a" style="left:14px;top:72.21px;font-family:'Liberation Mono',monospace;font-size:18px;transform:scaleX(0.9259);transform-origin:0 0;color:#FF6B68">Error: Cannot find module &#x27;../dist/pnpm.cjs&#x27;</div>
<div class="a" style="left:14px;top:99.71px;font-family:'Liberation Mono',monospace;font-size:18px;transform:scaleX(0.9259);transform-origin:0 0;color:#FF6B68">Require stack:</div>
<div class="a" style="left:14px;top:127.21px;font-family:'Liberation Mono',monospace;font-size:18px;transform:scaleX(0.9259);transform-origin:0 0;color:#FF6B68">- C:\Users\DELL\.hvigor\wrapper\tools\node_modules\pnpm\bin\pnpm.cjs</div>
<div class="a" style="left:14px;top:154.71px;font-family:'Liberation Mono',monospace;font-size:18px;transform:scaleX(0.9259);transform-origin:0 0;color:#FF6B68">    at Function.Module._resolveFilename (node:internal/modules/cjs/loader:933:15)</div>
<div class="a" style="left:14px;top:182.21px;font-family:'Liberation Mono',monospace;font-size:18px;transform:scaleX(0.9259);transform-origin:0 0;color:#FF6B68">    at Function.Module._load (node:internal/modules/cjs/loader:778:27)</div>
<div class="a" style="left:14px;top:209.71px;font-family:'Liberation Mono',monospace;font-size:18px;transform:scaleX(0.9259);transform-origin:0 0;color:#FF6B68">    at Module.require (node:internal/modules/cjs/loader:1005:19)</div>
<div class="a" style="left:14px;top:237.21px;font-family:'Liberation Mono',monospace;font-size:18px;transform:scaleX(0.9259);transform-origin:0 0;color:#FF6B68">    at require (node:internal/modules/cjs/helpers:102:18)</div>
<div class="a" style="left:14px;top:264.71px;font-family:'Liberation Mono',monospace;font-size:18px;transform:scaleX(0.9259);transform-origin:0 0;color:#FF6B68">    at Object.&lt;anonymous&gt; (</div>
<div class="a" style="left:14px;top:292.21px;font-family:'Liberation Mono',monospace;font-size:18px;transform:scaleX(0.9259);transform-origin:0 0;color:#FF6B68">    at Module._compile (node:internal/modules/cjs/loader:1105:14)</div>
<div class="a" style="left:14px;top:319.71px;font-family:'Liberation Mono',monospace;font-size:18px;transform:scaleX(0.9259);transform-origin:0 0;color:#FF6B68">    at Object.Module._extensions..js (node:internal/modules/cjs/loader:1159:10)</div>
<div class="a" style="left:14px;top:347.21px;font-family:'Liberation Mono',monospace;font-size:18px;transform:scaleX(0.9259);transform-origin:0 0;color:#FF6B68">    at Module.load (node:internal/modules/cjs/loader:981:32)</div>
<div class="a" style="left:14px;top:374.71px;font-family:'Liberation Mono',monospace;font-size:18px;transform:scaleX(0.9259);transform-origin:0 0;color:#FF6B68">    at Function.Module._load (node:internal/modules/cjs/loader:822:12)</div>
<div class="a" style="left:14px;top:402.21px;font-family:'Liberation Mono',monospace;font-size:18px;transform:scaleX(0.9259);transform-origin:0 0;color:#FF6B68">    at Function.executeUserEntryPoint [as runMain] (node:internal/modules/run_main:77:12) {</div>
<div class="a" style="left:14px;top:429.71px;font-family:'Liberation Mono',monospace;font-size:18px;transform:scaleX(0.9259);transform-origin:0 0;color:#FF6B68">  code: &#x27;MODULE_NOT_FOUND&#x27;,</div>
<div class="a" style="left:14px;top:457.21px;font-family:'Liberation Mono',monospace;font-size:18px;transform:scaleX(0.9259);transform-origin:0 0;color:#FF6B68">  requireStack: [</div>
<div class="a" style="left:284px;top:264.71px;font-family:'Liberation Mono',monospace;font-size:18px;transform:scaleX(0.9259);transform-origin:0 0;color:#8A8A8A;text-decoration:underline;text-underline-offset:3px">C:\Users\DELL\.hvigor\wrapper\tools\node_modules\pnpm\bin\pnpm.cjs:16:1</div>
<div class="a" style="left:994px;top:264.71px;font-family:'Liberation Mono',monospace;font-size:18px;transform:scaleX(0.9259);transform-origin:0 0;color:#FF6B68">)</div>
</div>
<div class="hl" style="left:77px;top:492px;width:253px;height:4px;background:#73777B;border-radius:2px"></div>
<div class="hl" style="left:1881px;top:545px;width:10px;height:316px;background:#4A4A4A;"></div>
<svg style="left:0;top:0" width="1920" height="1030"><path d="M40 507 L52 514 L40 521 Z" fill="#499C54"/><path d="M38.5 553 L46 545.5" stroke="#AFB1B3" stroke-width="3.2" stroke-linecap="round"/><path d="M44.5 543 A5.2 5.2 0 1 0 53 540.5 L49.8 543.7 L47.6 541.4 L50.8 538.3 A5.2 5.2 0 0 0 44.5 543 Z" fill="#AFB1B3"/><rect x="33" y="566" width="24" height="1" fill="#515151"/><rect x="33" y="608" width="24" height="1" fill="#515151"/><rect x="33" y="649" width="24" height="1" fill="#515151"/><rect x="39" y="581" width="12.5" height="12.5" fill="#5A5A5A"/><rect x="37" y="623" width="10" height="5.5" fill="#AFB1B3"/><rect x="48.5" y="623" width="4.5" height="5.5" fill="#AFB1B3"/><rect x="37" y="630" width="16" height="5" fill="#AFB1B3"/><path d="M47 661.5 L54 668.5 L50.5 670 L47.5 674 L47.5 677 L38 667.5 L41 667.5 L45 664.5 Z" fill="#AFB1B3"/><path d="M36 679 L42.5 672.5" stroke="#AFB1B3" stroke-width="1.8"/><path d="M81 522 V509 M75.5 514.5 L81 509 L86.5 514.5" fill="none" stroke="#AFB1B3" stroke-width="1.8"/><path d="M81 540 V555 M75.5 549.5 L81 555 L86.5 549.5" fill="none" stroke="#AFB1B3" stroke-width="1.8"/><rect x="73" y="572.5" width="16" height="2" fill="#AFB1B3"/><path d="M73 579.5 H85 A4 4 0 0 1 85 587.5 H80" fill="none" stroke="#AFB1B3" stroke-width="2"/><path d="M82 584.5 L79 587.5 L82 590.5" fill="none" stroke="#AFB1B3" stroke-width="1.8"/><rect x="73" y="586.5" width="3" height="2" fill="#AFB1B3"/><rect x="67" y="599" width="28" height="28" rx="3" fill="#4C5052"/><rect x="73" y="607" width="5" height="2" fill="#AFB1B3"/><rect x="73" y="612" width="5" height="2" fill="#AFB1B3"/><rect x="73" y="618.5" width="16" height="2" fill="#AFB1B3"/><path d="M84 604.5 V615 M80 611 L84 615 L88 611" fill="none" stroke="#AFB1B3" stroke-width="1.8"/><rect x="76" y="637" width="10" height="4" fill="#AFB1B3"/><rect x="72" y="642" width="18" height="8" rx="1" fill="#AFB1B3"/><rect x="75.5" y="647" width="11" height="7" fill="#3C3F41" stroke="#AFB1B3" stroke-width="1.5"/><rect x="73.5" y="670.5" width="15" height="2.5" fill="#AFB1B3"/><rect x="78.5" y="669" width="5" height="2" fill="#AFB1B3"/><path d="M75 674.5 H87 L86 686 H76 Z" fill="#AFB1B3"/></svg>
<svg style="left:0px;top:0px" width="1" height="1" viewBox="0 0 1 1"><path d="M1901.5 98 C1901.5 92 1902.5 88.2 1907 88.2 C1911.5 88.2 1912.5 92 1912.5 98 L1914 99.8 H1900 Z" fill="#BDBFC1"/><rect x="1904.8" y="100.6" width="4.4" height="1.8" rx="0.9" fill="#BDBFC1"/><circle cx="1912.3" cy="88.3" r="3.4" fill="#3C3F41"/><circle cx="1912.3" cy="88.3" r="2.7" fill="#3592C4"/></svg>
<div class="a" style="left:1867.33px;top:139.84px;font-size:14.2px;color:#BBBBBB;line-height:normal;transform:rotate(90deg);transform-origin:50% 50%">Notifications</div>
<svg style="left:1897px;top:214px" width="18" height="14" viewBox="0 0 18 14"><path d="M1 7 Q9 -1 17 7 Q9 15 1 7 Z" fill="#AFB1B3"/><circle cx="9" cy="7" r="2.8" fill="#3C3F41"/><circle cx="9" cy="7" r="1.5" fill="#AFB1B3"/></svg>
<div class="a" style="left:1874.43px;top:257.84px;font-size:14.2px;color:#BBBBBB;line-height:normal;transform:rotate(90deg);transform-origin:50% 50%">Previewer</div>
<div class="hl" style="left:175px;top:976px;width:67px;height:28px;background:#2D2F30;"></div>
<div class="a" style="left:64.4px;top:983.13px;font-size:14px;color:#BBBBBB;font-family:'Liberation Sans',sans-serif;line-height:normal;">Version Control</div>
<div class="a" style="left:208px;top:982.86px;font-size:14.3px;color:#E6E6E6;font-family:'Liberation Sans',sans-serif;line-height:normal;">Run</div>
<div class="a" style="left:276.4px;top:983.13px;font-size:14px;color:#BBBBBB;font-family:'Liberation Sans',sans-serif;line-height:normal;">TODO</div>
<div class="a" style="left:360.6px;top:983.13px;font-size:14px;color:#BBBBBB;font-family:'Liberation Sans',sans-serif;line-height:normal;">Log</div>
<div class="a" style="left:428.6px;top:983.13px;font-size:14px;color:#BBBBBB;font-family:'Liberation Sans',sans-serif;line-height:normal;">Problems</div>
<div class="a" style="left:533px;top:983.13px;font-size:14px;color:#BBBBBB;font-family:'Liberation Sans',sans-serif;line-height:normal;">Terminal</div>
<div class="a" style="left:631px;top:983.13px;font-size:14px;color:#BBBBBB;font-family:'Liberation Sans',sans-serif;line-height:normal;">Services</div>
<div class="a" style="left:731px;top:983.13px;font-size:14px;color:#BBBBBB;font-family:'Liberation Sans',sans-serif;line-height:normal;">Profiler</div>
<div class="a" style="left:821.6px;top:983.22px;font-size:13.9px;color:#BBBBBB;font-family:'Liberation Sans',sans-serif;line-height:normal;">Code Linter</div>
<svg style="left:0;top:0" width="1920" height="1030"><circle cx="47.5" cy="985.5" r="2" fill="#AFB1B3"/><circle cx="47.5" cy="996" r="2" fill="#AFB1B3"/><circle cx="54" cy="986.5" r="2" fill="#AFB1B3"/><path d="M47.5 985.5 V996 M54 986.5 C54 991 49 990.5 47.5 994" fill="none" stroke="#AFB1B3" stroke-width="2"/><path d="M188.5 984.5 L198.5 990.3 L188.5 996.2 Z" fill="#AFB1B3"/><rect x="257" y="985" width="3" height="2.2" fill="#AFB1B3"/><rect x="261.5" y="985" width="8.5" height="2.2" fill="#AFB1B3"/><rect x="257" y="989" width="3" height="2.2" fill="#AFB1B3"/><rect x="261.5" y="989" width="8.5" height="2.2" fill="#AFB1B3"/><rect x="257" y="993" width="3" height="2.2" fill="#AFB1B3"/><rect x="261.5" y="993" width="8.5" height="2.2" fill="#AFB1B3"/><rect x="339" y="984" width="15.5" height="13.5" rx="1" fill="#AFB1B3"/><rect x="341.5" y="982" width="2" height="3" fill="#AFB1B3"/><rect x="350" y="982" width="2" height="3" fill="#AFB1B3"/><rect x="341" y="988" width="9" height="1.4" fill="#3C3F41"/><rect x="341" y="991" width="11" height="1.4" fill="#3C3F41"/><rect x="341" y="994" width="7" height="1.4" fill="#3C3F41"/><circle cx="414.5" cy="990.3" r="6.7" fill="#AFB1B3"/><rect x="413.4" y="985.5" width="2.2" height="6" fill="#3C3F41"/><rect x="413.4" y="993" width="2.2" height="2.2" fill="#3C3F41"/><rect x="512" y="983.5" width="14.5" height="13.5" fill="#AFB1B3"/><path d="M514 986.5 L517.5 989.5 L514 992.5" fill="none" stroke="#3C3F41" stroke-width="1.4"/><rect x="518.5" y="993" width="5" height="1.4" fill="#3C3F41"/><path d="M613.5 984.3 H622.3 L625.8 990.9 L622.3 997.5 H613.5 L610 990.9 Z" fill="#AFB1B3"/><path d="M615.8 986.8 L621.5 990.9 L615.8 995 Z" fill="#3C3F41"/><path d="M707.3 994 A9.6 9.6 0 0 1 721 986.3 M723.9 988.9 A9.6 9.6 0 0 1 725.1 994" fill="none" stroke="#BDBFC1" stroke-width="2.5"/><path d="M714.6 995.6 L717.8 996.4 L722.2 985.6 Z" fill="#BDBFC1"/><circle cx="807" cy="989.4" r="7.1" fill="#C4C6C8"/><path d="M811.5 994 L815.6 998" stroke="#C4C6C8" stroke-width="2.4" stroke-linecap="round"/><path d="M804.6 986.5 L802.4 989.4 L804.6 992.3 M809.4 986.5 L811.6 989.4 L809.4 992.3 M808 986 L806 992.8" fill="none" stroke="#3C3F41" stroke-width="1.3"/></svg>
<div class="a" style="left:14px;top:1007.82px;font-size:16px;color:#BBBBBB;font-family:'Liberation Sans',sans-serif;line-height:normal;">Sync project finished in 13 s 907 ms</div>
<div class="a" style="left:1316.7px;top:1008.09px;font-size:16.2px;color:#BBBBBB;font-family:'Liberation Sans',sans-serif;line-height:normal;">Scanning files to index</div>
<div class="hl" style="left:1488.5px;top:1014.8px;width:182.5px;height:5.5px;background:linear-gradient(90deg,#707274,#858585);border-radius:3px"></div>
<svg style="left:0;top:0" width="1920" height="1030"><circle cx="1701" cy="1017.7" r="7.7" fill="#E6AE00"/></svg>
<div class="a" style="left:1725px;top:1008.77px;font-size:15.5px;color:#BBBBBB;font-family:'Liberation Sans',sans-serif;line-height:normal;">LF</div>
<div class="a" style="left:1756px;top:1008.77px;font-size:15.5px;color:#BBBBBB;font-family:'Liberation Sans',sans-serif;line-height:normal;">UTF</div>
<div class="hl" style="left:1782.5px;top:1001px;width:140px;height:30px;background:#2C2C2C;border-radius:6px 0 0 0"></div>
<svg style="left:0;top:0" width="1920" height="1030"><rect x="1791" y="1009.5" width="28" height="13.5" fill="none" stroke="#1E9FE8" stroke-width="2.2"/><rect x="1803.9" y="1001" width="2.2" height="29" fill="#1E9FE8"/><circle cx="1835" cy="1012" r="2.8" fill="none" stroke="#D0D0D0" stroke-width="1.3"/><path d="M1845 1018 Q1846 1022 1842.5 1025" fill="none" stroke="#D0D0D0" stroke-width="2.2"/><path d="M1858 1016 H1878 M1857 1019.5 H1879 M1867.8 1007 V1027 M1861 1009 L1863.5 1013 M1875 1009 L1872.5 1013" fill="none" stroke="#D0D0D0" stroke-width="1.4"/><path d="M1891 1007 L1896.5 1005.5 Q1899.5 1009 1902.5 1005.5 L1908 1007 L1912 1013 L1908.5 1015 L1907 1013.5 V1027 H1892 V1013.5 L1890.5 1015 L1887 1013 Z" fill="#D0D0D0"/></svg>
<div class="hl" style="left:113px;top:460px;width:6.5px;height:1px;background:#7E878C;"></div>
</body></html>
